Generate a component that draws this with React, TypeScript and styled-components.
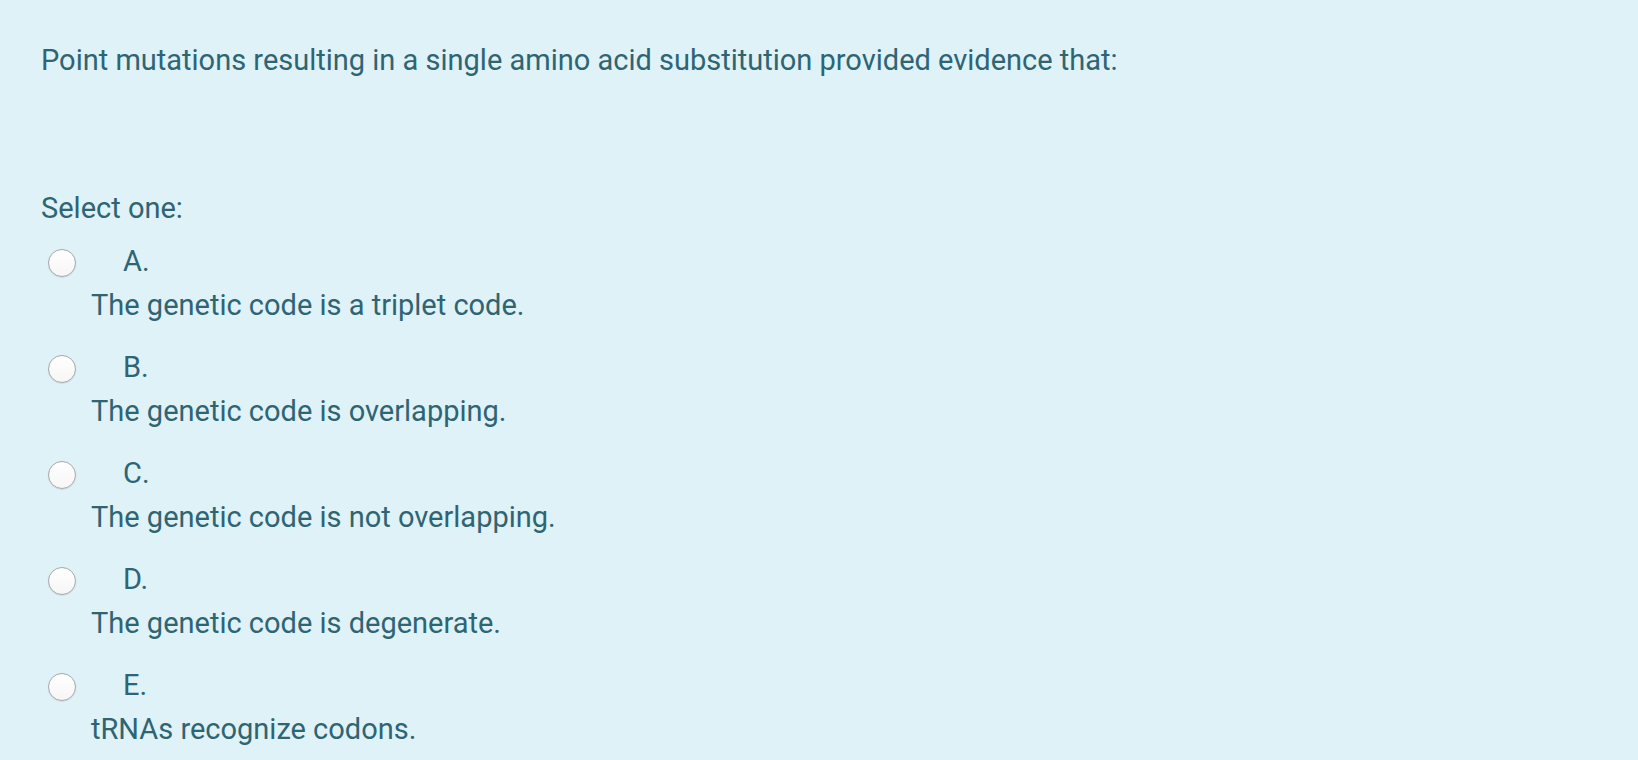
import React from "react";
import styled, { createGlobalStyle } from "styled-components";

const Global = createGlobalStyle`
  html, body { margin: 0; padding: 0; background: #def2f8; }
  body { font-family: Roboto, "Liberation Sans", Arial, sans-serif; color: #2f6473; }
`;

const Formulation = styled.div`
  min-height: 760px;
  box-sizing: border-box;
  background: #def2f8;
  padding: 38px 0 0 41px;
  font-size: 29px;
  line-height: 44px;
`;

const QText = styled.div`
  margin-bottom: 104px;
`;

const Prompt = styled.div`
  margin-bottom: 9px;
`;

const Answers = styled.div`
  display: flex;
  flex-direction: column;
  gap: 18px;
`;

const Option = styled.div`
  display: flex;
  flex-direction: column;
`;

const Head = styled.div`
  display: flex;
  align-items: center;
  height: 44px;
`;

const Radio = styled.span`
  box-sizing: border-box;
  width: 28px;
  height: 28px;
  margin: 3px 0 0 7px;
  border-radius: 50%;
  border: 1px solid #a9a9a9;
  background: linear-gradient(#ffffff, #f6f6f6);
  box-shadow: 0 0.5px 1px rgba(0, 0, 0, 0.15);
  flex: none;
`;

const Letter = styled.span`
  margin-left: 47px;
`;

const Body = styled.div`
  padding-left: 50px;
`;

const options = [
  ["A.", "The genetic code is a triplet code."],
  ["B.", "The genetic code is overlapping."],
  ["C.", "The genetic code is not overlapping."],
  ["D.", "The genetic code is degenerate."],
  ["E.", "tRNAs recognize codons."],
];

export default function App() {
  return (
    <>
      <Global />
      <Formulation>
        <QText>
          Point mutations resulting in a single amino acid substitution provided evidence that:
        </QText>
        <Prompt>Select one:</Prompt>
        <Answers>
          {options.map(([l, t]) => (
            <Option key={l}>
              <Head>
                <Radio />
                <Letter>{l}</Letter>
              </Head>
              <Body>{t}</Body>
            </Option>
          ))}
        </Answers>
      </Formulation>
    </>
  );
}
